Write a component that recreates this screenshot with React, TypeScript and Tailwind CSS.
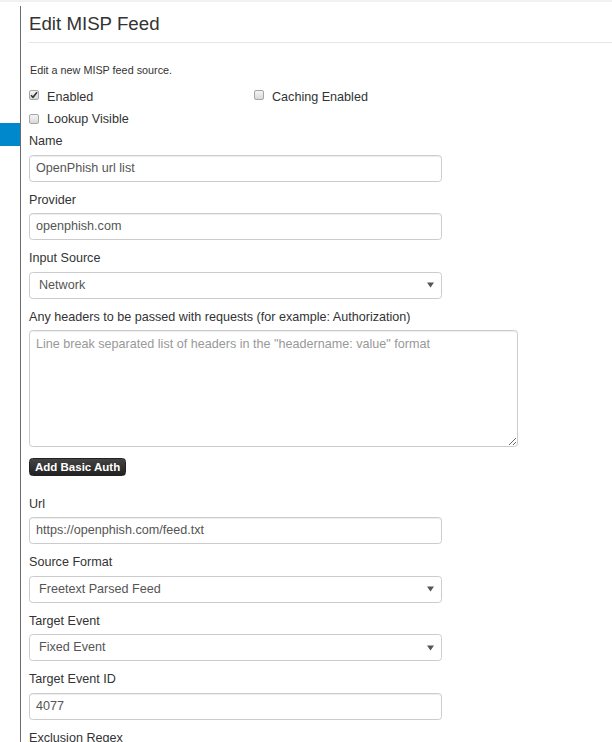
import React from "react";

function Check({ checked }: { checked?: boolean }) {
  return (
    <div className="mt-[3.5px] h-[10px] w-[10px] shrink-0 rounded-[2px] border border-[#a6a6a6] bg-gradient-to-b from-[#f4f4f4] to-[#d9d9d9] flex items-center justify-center">
      {checked && (
        <svg width="8" height="8" viewBox="0 0 8 8">
          <path d="M1 4.2 L3 6.2 L7 1.2" stroke="#333" strokeWidth="1.6" fill="none" />
        </svg>
      )}
    </div>
  );
}

function Label({ children }: { children: React.ReactNode }) {
  return <div className="text-[12.6px] leading-[18px] mb-[4.5px] text-[#333]">{children}</div>;
}

function TextInput({ value }: { value: string }) {
  return (
    <div className="mb-[9px] h-[27px] w-[413px] rounded-[3.5px] border border-[#ccc] bg-white shadow-[inset_0_1px_1px_rgba(0,0,0,0.075)] px-[6px] flex items-center text-[12.6px] text-[#555]">
      {value}
    </div>
  );
}

function Select({ value }: { value: string }) {
  return (
    <div className="mb-[9px] h-[27px] w-[413px] rounded-[3.5px] border border-[#ccc] bg-white pl-[9px] pr-[7px] flex items-center justify-between text-[12.6px] text-[#555]">
      <span>{value}</span>
      <svg width="7" height="6" viewBox="0 0 7 6">
        <path d="M0 0.5 H7 L3.5 5.5 Z" fill="#555" />
      </svg>
    </div>
  );
}

export default function App() {
  return (
    <div className="min-h-[742px] bg-white font-['Liberation_Sans',Arial,sans-serif] text-[#333] overflow-hidden">
      <div className="h-[2px] bg-[#f1f1f1]" />
      <div className="flex min-h-[740px]">
        <div className="w-[20px] shrink-0 pt-[121px]">
          <div className="h-[23px] bg-[#0088cc]" />
        </div>
        <div className="mt-[4px] w-px shrink-0 bg-[#6b6b6b]" />
        <div className="flex-1 pl-[8px]">
          <div className="border-b border-[#e5e5e5] pt-[9.5px] pb-[6.5px] text-[18.7px] leading-[24px] text-[#333]">
            Edit MISP Feed
          </div>
          <div className="pt-[19px] text-[10.8px] leading-[16px] pl-px">Edit a new MISP feed source.</div>
          <div className="mt-[8.7px] flex">
            <div className="flex w-[225px] gap-[8px] text-[12.6px] h-[22px] items-start">
              <Check checked />
              <span className="leading-[18px] mt-[1.5px]">Enabled</span>
            </div>
            <div className="flex gap-[8px] text-[12.6px] h-[22px] items-start">
              <Check />
              <span className="leading-[18px] mt-[1.5px]">Caching Enabled</span>
            </div>
          </div>
          <div className="flex gap-[8px] text-[12.6px] h-[22px] items-start">
            <div className="mt-[1.5px]"><Check /></div>
            <span className="leading-[18px] mt-[1.5px]">Lookup Visible</span>
          </div>
          <div className="pt-[1.5px]" />
          <Label>Name</Label>
          <TextInput value="OpenPhish url list" />
          <Label>Provider</Label>
          <TextInput value="openphish.com" />
          <Label>Input Source</Label>
          <Select value="Network" />
          <Label>Any headers to be passed with requests (for example: Authorization)</Label>
          <textarea
            readOnly
            placeholder={'Line break separated list of headers in the "headername: value" format'}
            className="block h-[117px] w-[489px] rounded-[3.5px] border border-[#ccc] bg-white px-[6px] py-[3.6px] text-[12.6px] leading-[18px] text-[#555] placeholder:text-[#999] shadow-[inset_0_1px_1px_rgba(0,0,0,0.075)] outline-none resize"
          />
          <div className="mt-[11px] mb-[18.5px] flex">
            <button className="h-[18px] rounded-[3.5px] border border-[#222] bg-gradient-to-b from-[#444] to-[#222] px-[5px] text-[11.5px] font-bold leading-[16px] text-white">
              Add Basic Auth
            </button>
          </div>
          <Label>Url</Label>
          <TextInput value="https://openphish.com/feed.txt" />
          <Label>Source Format</Label>
          <Select value="Freetext Parsed Feed" />
          <Label>Target Event</Label>
          <Select value="Fixed Event" />
          <Label>Target Event ID</Label>
          <TextInput value="4077" />
          <Label>Exclusion Regex</Label>
        </div>
      </div>
    </div>
  );
}
